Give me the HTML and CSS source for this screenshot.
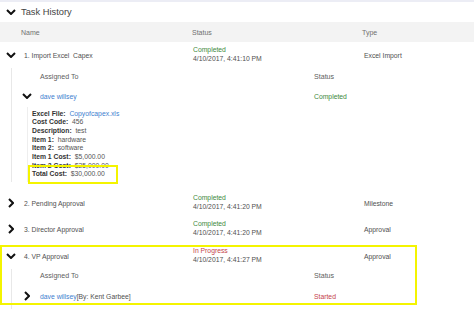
FILE: index.html
```html
<!DOCTYPE html>
<html>
<head>
<meta charset="utf-8">
<link rel="stylesheet" href="styles.css">
</head>
<body>
<div class="page">
  <div class="topbar"></div>
  <div class="title">
    <svg class="chev-down" width="10" height="6" viewBox="0 0 10 6"><path d="M1 1 L5 5 L9 1" fill="none" stroke="#111" stroke-width="2"/></svg>
    <span>Task History</span>
  </div>
  <div class="grid head">
    <div class="hname">Name</div>
    <div>Status</div>
    <div>Type</div>
  </div>

  <div class="grid row">
    <div class="name"><span class="ico"><svg width="10" height="6" viewBox="0 0 10 6"><path d="M1 1 L5 5 L9 1" fill="none" stroke="#111" stroke-width="2"/></svg></span>1. Import Excel&nbsp; Capex</div>
    <div class="status"><span class="ok">Completed</span><span>4/10/2017, 4:41:10 PM</span></div>
    <div class="type">Excel Import</div>
  </div>
  <div class="expand first">
    <div class="sub subhead"><div class="sname">Assigned To</div><div>Status</div></div>
    <div class="sub srow">
      <div class="sname2"><span class="ico"><svg width="10" height="6" viewBox="0 0 10 6"><path d="M1 1 L5 5 L9 1" fill="none" stroke="#111" stroke-width="2"/></svg></span><span class="link">dave willsey</span></div>
      <div class="ok">Completed</div>
    </div>
    <div class="details">
      <div><b>Excel File:</b>&nbsp; <span class="link">Copyofcapex.xls</span></div>
      <div><b>Cost Code:</b>&nbsp; 456</div>
      <div><b>Description:</b>&nbsp; test</div>
      <div><b>Item 1:</b>&nbsp; hardware</div>
      <div><b>Item 2:</b>&nbsp; software</div>
      <div><b>Item 1 Cost:</b>&nbsp; $5,000.00</div>
      <div><b>Item 2 Cost:</b>&nbsp; $25,000.00</div>
      <div><b>Total Cost:</b>&nbsp; $30,000.00</div>
    </div>
  </div>

  <div class="grid row">
    <div class="name"><span class="ico"><svg width="6" height="10" viewBox="0 0 6 10"><path d="M1 1 L5 5 L1 9" fill="none" stroke="#111" stroke-width="2"/></svg></span>2. Pending Approval</div>
    <div class="status"><span class="ok">Completed</span><span>4/10/2017, 4:41:20 PM</span></div>
    <div class="type">Milestone</div>
  </div>
  <div class="grid row">
    <div class="name"><span class="ico"><svg width="6" height="10" viewBox="0 0 6 10"><path d="M1 1 L5 5 L1 9" fill="none" stroke="#111" stroke-width="2"/></svg></span>3. Director Approval</div>
    <div class="status"><span class="ok">Completed</span><span>4/10/2017, 4:41:20 PM</span></div>
    <div class="type">Approval</div>
  </div>
  <div class="grid row vp">
    <div class="name"><span class="ico"><svg width="10" height="6" viewBox="0 0 10 6"><path d="M1 1 L5 5 L9 1" fill="none" stroke="#111" stroke-width="2"/></svg></span>4. VP Approval</div>
    <div class="status"><span class="bad">In Progress</span><span>4/10/2017, 4:41:27 PM</span></div>
    <div class="type">Approval</div>
  </div>
  <div class="expand last">
    <div class="sub subhead2"><div class="sname">Assigned To</div><div>Status</div></div>
    <div class="sub srow2">
      <div class="sname2"><span class="ico"><svg width="6" height="10" viewBox="0 0 6 10"><path d="M1 1 L5 5 L1 9" fill="none" stroke="#111" stroke-width="2"/></svg></span><span><span class="link">dave willsey</span>[By: Kent Garbee]</span></div>
      <div class="bad">Started</div>
    </div>
  </div>

  <div class="mark mark1"></div>
  <div class="mark mark2"></div>
</div>
</body>
</html>
```
FILE: styles.css
```css
html, body {
  margin: 0;
  padding: 0;
  background: #fff;
}
body {
  width: 474px;
  height: 309px;
  overflow: hidden;
  font-family: "Liberation Sans", Arial, sans-serif;
  font-size: 6.8px;
  color: #505050;
}
.page {
  position: relative;
  height: 309px;
}
.topbar {
  height: 2px;
  background: #ecedf5;
}
.title {
  height: 20px;
  display: flex;
  align-items: center;
  padding-left: 6px;
  gap: 5px;
  font-size: 9.3px;
  color: #444;
}
.grid {
  display: grid;
  grid-template-columns: 192px 170px 1fr;
}
.head {
  height: 20px;
  align-items: center;
  background: #f3f3f3;
  color: #707070;
  font-size: 7px;
}
.hname {
  padding-left: 21px;
}
.row {
  height: 26px;
}
.row.vp {
  height: 27px;
  padding-top: 1px;
  box-sizing: border-box;
}
.name {
  display: flex;
  align-items: center;
  padding-left: 6px;
  gap: 8px;
}
.ico {
  width: 10px;
  display: flex;
  justify-content: center;
  align-items: center;
}
.status {
  display: flex;
  flex-direction: column;
  padding-top: 3px;
  padding-left: 1px;
  line-height: 9px;
}
.type {
  display: flex;
  align-items: center;
  padding-left: 2px;
}
.ok { color: #3e8a3e; }
.bad { color: #c4434d; }
.link { color: #3f7fcf; }
.expand {
  margin-left: 11px;
  border-left: 1px solid #e8e8e8;
}
.expand.first {
  margin-bottom: 8px;
}
.expand.last {
  height: 41px;
}
.sub {
  display: grid;
  grid-template-columns: 302px 1fr;
  align-items: center;
}
.subhead { height: 17px; color: #606060; font-size: 7.1px; }
.srow { height: 22px; }
.subhead2 { height: 14px; color: #606060; font-size: 7.1px; }
.srow2 { height: 26px; }
.sname {
  padding-left: 28px;
}
.sname2 {
  display: flex;
  align-items: center;
  padding-left: 10px;
  gap: 8px;
}
.details {
  margin-left: 15px;
  border-left: 1px solid #eeeeee;
  padding: 2.7px 0 3px 4px;
  line-height: 8.67px;
  color: #555;
}
.details b {
  color: #333;
}
.mark {
  position: absolute;
  border: 2px solid #f4f400;
  box-sizing: border-box;
}
.mark1 {
  left: 28px;
  top: 165px;
  width: 90px;
  height: 19px;
}
.mark2 {
  left: 0;
  top: 245px;
  width: 417px;
  height: 60px;
}
```
